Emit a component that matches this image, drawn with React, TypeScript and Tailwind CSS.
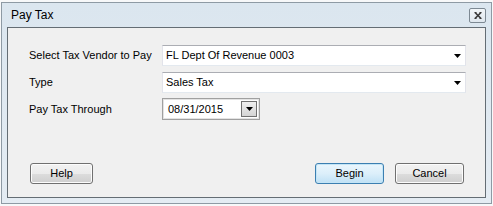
import { ReactNode } from 'react';

const font = { fontFamily: '"Liberation Sans", Arial, sans-serif' };

// small black dropdown triangle
function Arrow() {
    return (
        <svg width="7" height="4" viewBox="0 0 7 4">
            <polygon points="0,0 7,0 3.5,4" fill="#000" />
        </svg>
    );
}

function Combo({ value }: { value: string }) {
    return (
        <div className="flex items-center justify-between w-[304px] h-[21px] bg-white border border-[#e2e3ea] border-t-[#abadb3] border-b-[#e3e9ef] pl-[3px] pr-[4px] text-[11px] text-black">
            <span>{value}</span>
            <Arrow />
        </div>
    );
}

function DatePicker({ value }: { value: string }) {
    return (
        <div className="flex items-center justify-between w-[98px] h-[22px] bg-white border border-[#a0a0a0] shadow-[inset_1px_1px_0_#e3e3e3,inset_-1px_-1px_0_#e3e3e3] pl-[5px] pr-[2px] text-[11px]">
            <span>{value}</span>
            <div className="flex items-center justify-center w-[16px] h-[16px] border border-[#707070] bg-gradient-to-b from-[#f0f0f0] to-[#d4d4d4]">
                <Arrow />
            </div>
        </div>
    );
}

function Row({ label, children }: { label: string; children: ReactNode }) {
    return (
        <div className="flex items-center">
            <div className="w-[133px] text-[11px] text-black">{label}</div>
            {children}
        </div>
    );
}

function Button({ label, width, focused }: { label: string; width: string; focused?: boolean }) {
    return (
        <button
            className={
                focused
                    ? `${width} h-[21px] rounded-[3px] border border-[#3c7fb1] bg-gradient-to-b from-[#eaf6fd] via-[#dceffa] to-[#bfe1f5] shadow-[inset_0_0_0_1px_#c4e5f6] text-[11px] text-black`
                    : `${width} h-[21px] rounded-[3px] border border-[#707070] bg-[linear-gradient(#f2f2f2,#ebebeb_50%,#dddddd_50%,#cfcfcf)] shadow-[inset_0_0_0_1px_#fcfcfc] text-[11px] text-black`
            }
            style={font}
        >
            {label}
        </button>
    );
}

export default function App() {
    return (
        <div className="w-[493px] h-[206px] bg-[#f7f8f9] pt-[2px] pl-[1px]" style={font}>
            <div className="w-[491px] h-[202px] border border-[#8e9aa4] bg-gradient-to-b from-[#dbe6ef] to-[#e4ecf3] flex flex-col px-[5px] pb-[5px]">
                {/* title bar */}
                <div className="h-[24px] flex items-center justify-between shrink-0">
                    <span className="pl-[4px] text-[12px] text-black">Pay Tax</span>
                    <div className="flex items-center justify-center w-[17px] h-[15px] mt-[1px] rounded-[2px] border border-[#7d8993] bg-gradient-to-b from-[#f2f6f9] to-[#dfe7ee]">
                        <svg width="8" height="7" viewBox="0 0 8 7">
                            <path d="M1 0.5 L7 6.5 M7 0.5 L1 6.5" stroke="#3a3a3a" strokeWidth="1.6" />
                            <path d="M0.5 0.5h2M5.5 0.5h2M0.5 6.5h2M5.5 6.5h2" stroke="#3a3a3a" strokeWidth="1" />
                        </svg>
                    </div>
                </div>
                {/* client area */}
                <div className="flex-1 border border-[#646d74] bg-[#f0f0f0] flex flex-col">
                    <div className="flex flex-col gap-[6px] pt-[17px] pl-[21px]">
                        <Row label="Select Tax Vendor to Pay">
                            <Combo value="FL Dept Of Revenue 0003" />
                        </Row>
                        <Row label="Type">
                            <Combo value="Sales Tax" />
                        </Row>
                        <div className="-mt-[1px]">
                            <Row label="Pay Tax Through">
                                <DatePicker value="08/31/2015" />
                            </Row>
                        </div>
                    </div>
                    <div className="flex items-center justify-between mt-auto mb-[13px] pl-[22px] pr-[21px]">
                        <Button label="Help" width="w-[63px]" />
                        <div className="flex gap-[11px]">
                            <Button label="Begin" width="w-[69px]" focused />
                            <Button label="Cancel" width="w-[69px]" />
                        </div>
                    </div>
                </div>
            </div>
        </div>
    );
}
